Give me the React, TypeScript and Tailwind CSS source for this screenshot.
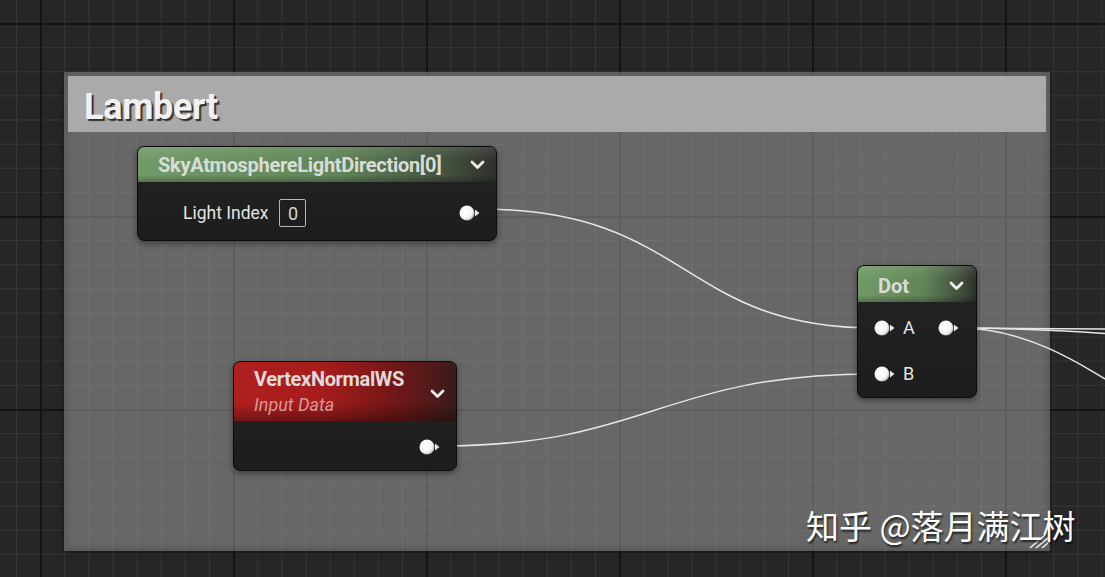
function Pin() {
  return (
    <svg width="23" height="16" viewBox="0 0 23 16" className="shrink-0">
      <defs>
        <radialGradient id="pinShade" cx="40%" cy="40%" r="60%">
          <stop offset="0%" stopColor="#ffffff" />
          <stop offset="75%" stopColor="#f4f4f4" />
          <stop offset="100%" stopColor="#bdbdbd" />
        </radialGradient>
      </defs>
      <circle cx="9" cy="8" r="7.5" fill="url(#pinShade)" />
      <path d="M17 4.5 L21.5 8 L17 11.5 Z" fill="#e8e8e8" />
    </svg>
  );
}

function Chevron() {
  return (
    <svg width="15" height="10" viewBox="0 0 15 10" className="shrink-0">
      <polyline points="2,2 7.5,7.5 13,2" fill="none" stroke="#f2f2f2" strokeWidth="2.8" strokeLinecap="round" strokeLinejoin="round" />
    </svg>
  );
}

const greenHeader =
  "bg-[linear-gradient(180deg,rgba(255,255,255,0.10)_0%,rgba(255,255,255,0)_35%,rgba(0,0,0,0)_80%,rgba(0,0,0,0.25)_100%),linear-gradient(90deg,#729a69_0%,#618558_55%,#45533f_85%,#2f312e_100%)]";

const nodeShell =
  "absolute flex flex-col rounded-[7px] border border-[#0b0b0b] bg-[linear-gradient(180deg,#222322_0%,#1c1d1c_100%)] shadow-[0_2px_6px_rgba(0,0,0,0.45)] overflow-hidden";

export default function App() {
  return (
    <div className="relative w-[1105px] h-[577px] overflow-hidden bg-[#262626] [background-image:linear-gradient(to_right,#141414_2px,transparent_2px),linear-gradient(to_bottom,#141414_2px,transparent_2px),linear-gradient(to_right,#373737_1px,transparent_1px),linear-gradient(to_bottom,#373737_1px,transparent_1px)] [background-size:193px_193px,193px_193px,24.125px_24.125px,24.125px_24.125px] [background-position:40px_0,0_23px,16px_0,0_23px] font-['Roboto','Liberation_Sans',sans-serif]">
      {/* comment box */}
      <div className="absolute left-[64px] top-[72px] w-[986px] h-[479px] flex flex-col p-[4px] bg-[rgba(168,168,168,0.5)] shadow-[inset_0_0_10px_rgba(0,0,0,0.25),0_2px_6px_rgba(0,0,0,0.4)]">
        <div className="h-[56px] bg-[#aaaaaa] flex items-center pl-[16px] pt-[5px]">
          <span className="text-[36px] font-bold tracking-[-0.3px] text-[#f1f1f1] [text-shadow:2px_2px_1px_#2e2e2e]">Lambert</span>
        </div>
      </div>

      {/* wires */}
      <svg className="absolute inset-0" width="1105" height="577" viewBox="0 0 1105 577" fill="none">
        <g stroke="#e6e6e6" strokeWidth="1.5">
          <path d="M480 209 C 690 209, 680 328, 875 328" />
          <path d="M440 446 C 650 446, 660 374, 875 374" />
          <path d="M958 328 L 1105 329" />
          <path d="M958 328 C 1030 328, 1090 332, 1200 340" />
          <path d="M958 328 C 1060 328, 1120 400, 1260 470" />
        </g>
      </svg>

      {/* SkyAtmosphereLightDirection node */}
      <div className={`${nodeShell} left-[137px] top-[146px] w-[360px] h-[95px]`}>
        <div className={`h-[35px] flex items-center justify-between pl-[20px] pr-[11px] pt-[1px] ${greenHeader}`}>
          <span className="text-[20px] font-bold tracking-[-0.3px] text-[#d8dcd6]">SkyAtmosphereLightDirection[0]</span>
          <Chevron />
        </div>
        <div className="flex-1 flex items-start justify-between pl-[45px] pr-[15px] pt-[17px]">
          <div className="flex items-center gap-[11px]">
            <span className="text-[17.5px] text-[#e4e4e4]">Light Index</span>
            <span className="w-[27px] h-[28px] border border-[#b5b5b5] rounded-[2px] flex items-center justify-center text-[18px] text-[#d8d8d8]">0</span>
          </div>
          <div className="pt-[6px]">
            <Pin />
          </div>
        </div>
      </div>

      {/* VertexNormalWS node */}
      <div className={`${nodeShell} left-[233px] top-[361px] w-[224px] h-[110px]`}>
        <div className="h-[59px] flex items-center justify-between pl-[20px] pr-[11px] bg-[linear-gradient(180deg,rgba(0,0,0,0)_0%,rgba(0,0,0,0)_70%,rgba(0,0,0,0.35)_100%),linear-gradient(90deg,#b01f1f_0%,#a61c1c_40%,#721717_72%,#3a1b1b_100%)]">
          <div className="flex flex-col leading-[25px] pt-[1px]">
            <span className="text-[20px] font-bold tracking-[-0.35px] text-[#e2dada]">VertexNormalWS</span>
            <span className="text-[18px] italic text-[#d59a98]">Input Data</span>
          </div>
          <div className="pt-[4px]">
            <Chevron />
          </div>
        </div>
        <div className="flex-1 flex items-start justify-end pr-[15px] pt-[18px]">
          <Pin />
        </div>
      </div>

      {/* Dot node */}
      <div className={`${nodeShell} left-[857px] top-[265px] w-[120px] h-[133px]`}>
        <div className={`h-[36px] shrink-0 flex items-center justify-between pl-[20px] pr-[12px] pt-[3px] ${greenHeader}`}>
          <span className="text-[20px] font-bold text-[#d8dcd6]">Dot</span>
          <Chevron />
        </div>
        <div className="flex flex-col pl-[15px] pr-[16px] pt-[18px] gap-[30px]">
          <div className="h-[16px] flex items-center justify-between">
            <div className="flex items-center gap-[7px]">
              <Pin />
              <span className="text-[18px] leading-none text-[#e4e4e4]">A</span>
            </div>
            <Pin />
          </div>
          <div className="h-[16px] flex items-center gap-[7px]">
            <Pin />
            <span className="text-[18px] leading-none text-[#e4e4e4]">B</span>
          </div>
        </div>
      </div>

      {/* resize grip */}
      <svg className="absolute left-[1026px] top-[528px]" width="24" height="22" viewBox="0 0 24 22">
        <g stroke="#f0f0f0" strokeWidth="1.6">
          <line x1="4" y1="20" x2="20" y2="6" />
          <line x1="10" y1="20" x2="22" y2="10" />
          <line x1="16" y1="20" x2="22" y2="15" />
        </g>
      </svg>

      {/* watermark */}
      <div className="absolute left-[806px] top-[502px] text-[33px] leading-[46px] text-white font-['Noto_Sans_CJK_SC',sans-serif] [text-shadow:1px_2px_2px_rgba(0,0,0,0.7)]">
        知乎 @落月满江树
      </div>
    </div>
  );
}
